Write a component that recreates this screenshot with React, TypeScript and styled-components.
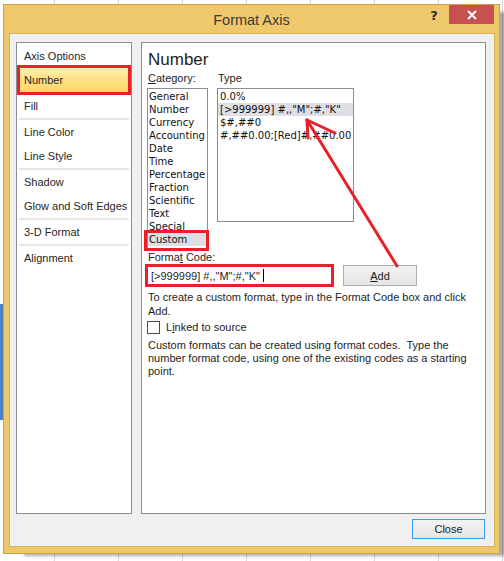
import * as React from "react";
import styled, { createGlobalStyle } from "styled-components";

const GlobalStyle = createGlobalStyle`
  html, body {
    margin: 0;
    padding: 0;
  }

  body {
    background-color: #ffffff;
    background-image:
      linear-gradient(#4f81bd, #4f81bd),
      linear-gradient(to right, #d6d6d6 1px, transparent 1px);
    background-repeat: no-repeat, repeat;
    background-size: 3px 116px, 64px 100%;
    background-position: 0 304px, 54px 0;
    font-family: "Liberation Sans", Arial, sans-serif;
    font-size: 11px;
    color: #1e1e1e;
  }
`;

const Page = styled.div`
  position: relative;
  width: 504px;
  height: 561px;
  box-sizing: border-box;
  padding: 4px 0 0 3px;
`;

const Window = styled.div`
  width: 497px;
  height: 550px;
  box-sizing: border-box;
  display: flex;
  flex-direction: column;
  background: #efc86b;
  border: 1px solid #c9a24c;
  box-shadow: 18px 5px 3px -3px rgba(0, 0, 0, 0.32);
`;

const TitleBar = styled.div`
  height: 28px;
  display: grid;
  grid-template-columns: 1fr auto 1fr;
  align-items: center;
`;

const Title = styled.div`
  grid-column: 2;
  font-size: 14.5px;
  color: #3a3a3a;
  padding-top: 1px;
`;

const Controls = styled.div`
  grid-column: 3;
  align-self: start;
  display: flex;
  justify-content: flex-end;
  align-items: flex-start;
  padding-right: 5px;
`;

const HelpButton = styled.div`
  width: 26px;
  height: 20px;
  margin-right: 2px;
  display: flex;
  align-items: center;
  justify-content: center;
  font-family: "DejaVu Sans", sans-serif;
  font-weight: 700;
  font-size: 13px;
  color: #2b2b2b;
`;

const CloseX = styled.div`
  width: 45px;
  height: 19px;
  background: #c75050;
  display: flex;
  align-items: center;
  justify-content: center;
`;

const Client = styled.div`
  flex: 1;
  margin: 0 4px 6px 5px;
  box-sizing: border-box;
  background: #f0f0f0;
  border: 1px solid #d7b25c;
  padding: 8px 8px 7px 6px;
  display: flex;
  flex-direction: column;
`;

const Body = styled.div`
  height: 472px;
  display: flex;
  gap: 9px;
`;

const NavPanel = styled.div`
  width: 116px;
  box-sizing: border-box;
  background: #ffffff;
  border: 1px solid #8b8d91;
  padding-top: 1px;
  display: flex;
  flex-direction: column;
`;

const NavItem = styled.div<{ $active?: boolean }>`
  height: ${(p) => (p.$active ? 30 : 24)}px;
  box-sizing: border-box;
  display: flex;
  align-items: center;
  padding-left: ${(p) => (p.$active ? 4 : 7)}px;
  color: #262626;
  ${(p) =>
    p.$active &&
    `
    margin: -3px 0 -1px;
    border: 3px solid #e8202a;
    background: linear-gradient(#fff0b0, #fee189 45%, #ffd864);
  `}
`;

const NavSep = styled.div`
  height: 2px;
  margin: 0 2px;
  background: #e6e6e6;
`;

const ContentPanel = styled.div`
  flex: 1;
  box-sizing: border-box;
  background: #ffffff;
  border: 1px solid #8b8d91;
  padding: 7px 0 0 5px;
`;

const Heading = styled.div`
  height: 20px;
  line-height: 20px;
  font-size: 17px;
  color: #1e1e1e;
  padding-left: 1px;
`;

const Columns = styled.div`
  display: grid;
  grid-template-columns: 61px 137px;
  column-gap: 9px;
  align-items: start;
`;

const Label = styled.div`
  height: 14px;
  line-height: 14px;
  padding-left: 1px;
  margin-top: 1px;
`;

const Key = styled.span`
  text-decoration: underline;
  text-underline-offset: 1px;
`;

const ListBox = styled.div<{ $height: number; $indent: number }>`
  margin-top: 3px;
  height: ${(p) => p.$height}px;
  box-sizing: border-box;
  border: 1px solid #8b8d91;
  padding-top: 1px;
  overflow: hidden;
  font-family: "DejaVu Sans", sans-serif;
  font-size: 10px;
  color: #111;

  & > div {
    padding-left: ${(p) => p.$indent}px;
  }
`;

const ListRow = styled.div<{ $selected?: boolean; $marked?: boolean }>`
  position: relative;
  height: 13px;
  line-height: 13px;
  white-space: nowrap;
  background: ${(p) => (p.$selected ? "#dedee4" : "transparent")};

  ${(p) =>
    p.$marked &&
    `
    &::after {
      content: "";
      position: absolute;
      left: -4px;
      right: -2px;
      top: -3px;
      bottom: -5px;
      border: 3px solid #e8202a;
    }
  `}
`;

const CategoryWrap = styled.div`
  position: relative;
`;

const CodeRow = styled.div`
  display: flex;
  align-items: center;
  margin-left: -2px;
`;

const CodeInput = styled.div`
  width: 189px;
  height: 23px;
  box-sizing: border-box;
  border: 3px solid #e8202a;
  background: #fff;
  padding-left: 3px;
  display: flex;
  align-items: center;
  white-space: pre;
`;

const Caret = styled.span`
  display: inline-block;
  width: 1px;
  height: 13px;
  background: #000;
`;

const Button = styled.div<{ $focused?: boolean }>`
  height: ${(p) => (p.$focused ? 20 : 21)}px;
  width: ${(p) => (p.$focused ? 73 : 74)}px;
  box-sizing: border-box;
  display: flex;
  align-items: center;
  justify-content: center;
  border: 1px solid ${(p) => (p.$focused ? "#3c9bf5" : "#adadad")};
  background: linear-gradient(#f2f2f2, #e6e6e6);
  color: #1a1a1a;
`;

const AddButton = styled(Button)`
  margin-left: 9px;
`;

const Text = styled.div<{ $lh: number; $mt: number }>`
  margin-top: ${(p) => p.$mt}px;
  line-height: ${(p) => p.$lh}px;
  padding-left: 1px;
`;

const CheckRow = styled.div`
  margin-top: 2px;
  height: 14px;
  display: flex;
  align-items: center;
  gap: 6px;
`;

const CheckBox = styled.div`
  width: 13px;
  height: 13px;
  box-sizing: border-box;
  border: 1px solid #4a4a4a;
  background: #fff;
`;

const Footer = styled.div`
  margin-top: 5px;
  display: flex;
  justify-content: flex-end;
  padding-right: 1px;
`;

const Arrow = styled.svg`
  position: absolute;
  left: 0;
  top: 0;
  pointer-events: none;
`;

const categories = [
  "General",
  "Number",
  "Currency",
  "Accounting",
  "Date",
  "Time",
  "Percentage",
  "Fraction",
  "Scientific",
  "Text",
  "Special",
  "Custom",
];

const types = [
  "0.0%",
  '[>999999] #,,"M";#,"K"',
  "$#,##0",
  "#,##0.00;[Red]#,##0.00",
];

const App = () => {
  return (
    <Page>
      <GlobalStyle />
      <Window>
        <TitleBar>
          <Title>Format Axis</Title>
          <Controls>
            <HelpButton>?</HelpButton>
            <CloseX>
              <svg width="10" height="10" viewBox="0 0 10 10">
                <path d="M1 1 L9 9 M9 1 L1 9" stroke="#fff" strokeWidth="2" />
              </svg>
            </CloseX>
          </Controls>
        </TitleBar>

        <Client>
          <Body>
            <NavPanel>
              <NavItem>Axis Options</NavItem>
              <NavItem $active>Number</NavItem>
              <NavItem>Fill</NavItem>
              <NavSep />
              <NavItem>Line Color</NavItem>
              <NavItem>Line Style</NavItem>
              <NavSep />
              <NavItem>Shadow</NavItem>
              <NavItem>Glow and Soft Edges</NavItem>
              <NavSep />
              <NavItem>3-D Format</NavItem>
              <NavSep />
              <NavItem>Alignment</NavItem>
            </NavPanel>

            <ContentPanel>
              <Heading>Number</Heading>
              <Columns>
                <Label>
                  <Key>C</Key>ategory:
                </Label>
                <Label>Type</Label>
                <CategoryWrap>
                  <ListBox $height={161} $indent={1} style={{ overflow: "visible" }}>
                    {categories.map((c) => (
                      <ListRow key={c} $selected={c === "Custom"} $marked={c === "Custom"}>
                        {c}
                      </ListRow>
                    ))}
                  </ListBox>
                </CategoryWrap>
                <ListBox $height={134} $indent={2}>
                  {types.map((t, i) => (
                    <ListRow key={t} $selected={i === 1}>
                      {t}
                    </ListRow>
                  ))}
                </ListBox>
              </Columns>

              <Label>
                Forma<Key>t</Key> Code:
              </Label>
              <CodeRow>
                <CodeInput>
                  {'[>999999] #,,"M";#,"K" '}
                  <Caret />
                </CodeInput>
                <AddButton>
                  <Key>A</Key>dd
                </AddButton>
              </CodeRow>

              <Text $lh={14} $mt={3}>
                To create a custom format, type in the Format Code box and click
                <br />
                Add.
              </Text>
              <CheckRow>
                <CheckBox />
                <span>
                  L<Key>i</Key>nked to source
                </span>
              </CheckRow>
              <Text $lh={13} $mt={5}>
                Custom formats can be created using format codes.&nbsp; Type the
                <br />
                number format code, using one of the existing codes as a starting
                <br />
                point.
              </Text>
            </ContentPanel>
          </Body>

          <Footer>
            <Button $focused>Close</Button>
          </Footer>
        </Client>
      </Window>

      <Arrow width="504" height="561" viewBox="0 0 504 561">
        <g stroke="#e8202a" strokeWidth="3" strokeLinecap="round" fill="none">
          <line x1="397" y1="266" x2="307" y2="120" />
          <line x1="307" y1="120" x2="308" y2="138" />
          <line x1="307" y1="120" x2="335" y2="133" />
        </g>
      </Arrow>
    </Page>
  );
};

export default App;
